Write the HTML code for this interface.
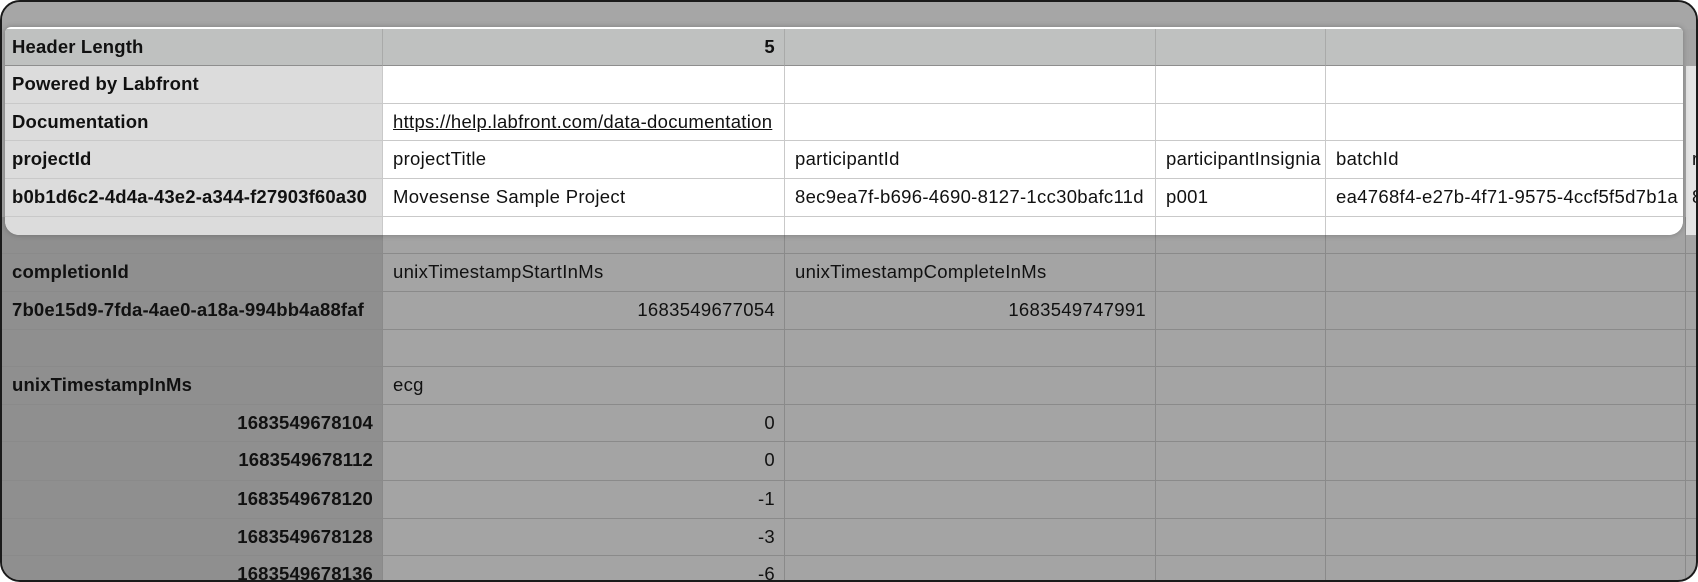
<!DOCTYPE html>
<html><head><meta charset="utf-8"><style>
*{margin:0;padding:0;box-sizing:border-box}
body{width:1698px;height:582px;background:#fff;overflow:hidden;font-family:"Liberation Sans",Arial,sans-serif;font-size:18.5px;letter-spacing:0.3px;color:#111}
#win{position:absolute;left:0;top:0;width:1698px;height:582px;border:2px solid #1a1a1a;border-radius:20px;overflow:hidden;background:#a4a4a4}
.r{position:absolute;left:0;width:1698px;height:38px}
.c{position:absolute;top:0;height:100%;border-right:1px solid #8a8a8a;border-bottom:1px solid #8a8a8a;padding:0 9px 0 10px;line-height:36px;white-space:nowrap;overflow:hidden}
.c0{left:0;width:381px;background:#8f8f8f;font-weight:bold;letter-spacing:0.15px}
.c1{left:381px;width:402px}.c2{left:783px;width:371px}.c3{left:1154px;width:170px}.c4{left:1324px;width:360px}.c5{left:1684px;width:30px;padding-left:6px}
.rt{text-align:right}
#panel{position:absolute;left:3px;top:25px;width:1678px;height:208px;border-radius:6px 6px 14px 14px;overflow:hidden;background:#fff;box-shadow:0 0 6px rgba(0,0,0,.25)}
#panel .r{left:-3px}
#panel .c{border-color:#c9c9c9;background:#fff}
#panel .c0{background:#dcdcdc}
#panel .hd .c{background:#bfc1c0;border-bottom-color:#8e8e8e;border-right-color:#a9aaa9}
a{color:#111;text-decoration:underline}
</style></head><body>
<div id="win">
<div style="position:absolute;left:0;top:0;width:1698px;height:27px;background:#a6a6a6"></div>
<div style="position:absolute;left:1684px;top:64px;width:20px;height:169px;background:#e4e4e4"></div>
<div class="r" style="top:139px"><div class="c c5" style="border:none">r</div></div>
<div class="r" style="top:177px"><div class="c c5" style="border:none">8</div></div>
<div class="r" style="top:215px;height:37px"><div class="c c0"></div><div class="c c1"></div><div class="c c2"></div><div class="c c3"></div><div class="c c4"></div><div class="c c5"></div></div>
<div class="r" style="top:252px"><div class="c c0">completionId</div><div class="c c1">unixTimestampStartInMs</div><div class="c c2">unixTimestampCompleteInMs</div><div class="c c3"></div><div class="c c4"></div><div class="c c5"></div></div>
<div class="r" style="top:290px"><div class="c c0">7b0e15d9-7fda-4ae0-a18a-994bb4a88faf</div><div class="c c1 rt">1683549677054</div><div class="c c2 rt">1683549747991</div><div class="c c3"></div><div class="c c4"></div><div class="c c5"></div></div>
<div class="r" style="top:328px;height:37px"><div class="c c0"></div><div class="c c1"></div><div class="c c2"></div><div class="c c3"></div><div class="c c4"></div><div class="c c5"></div></div>
<div class="r" style="top:365px"><div class="c c0">unixTimestampInMs</div><div class="c c1">ecg</div><div class="c c2"></div><div class="c c3"></div><div class="c c4"></div><div class="c c5"></div></div>
<div class="r" style="top:403px;height:37px"><div class="c c0 rt">1683549678104</div><div class="c c1 rt">0</div><div class="c c2"></div><div class="c c3"></div><div class="c c4"></div><div class="c c5"></div></div>
<div class="r" style="top:440px;height:39px"><div class="c c0 rt">1683549678112</div><div class="c c1 rt">0</div><div class="c c2"></div><div class="c c3"></div><div class="c c4"></div><div class="c c5"></div></div>
<div class="r" style="top:479px"><div class="c c0 rt">1683549678120</div><div class="c c1 rt">-1</div><div class="c c2"></div><div class="c c3"></div><div class="c c4"></div><div class="c c5"></div></div>
<div class="r" style="top:517px;height:37px"><div class="c c0 rt">1683549678128</div><div class="c c1 rt">-3</div><div class="c c2"></div><div class="c c3"></div><div class="c c4"></div><div class="c c5"></div></div>
<div class="r" style="top:554px"><div class="c c0 rt">1683549678136</div><div class="c c1 rt">-6</div><div class="c c2"></div><div class="c c3"></div><div class="c c4"></div><div class="c c5"></div></div>

<div id="panel">
<div class="r hd" style="top:2px;height:37px"><div class="c c0">Header Length</div><div class="c c1 rt" style="font-weight:bold">5</div><div class="c c2"></div><div class="c c3"></div><div class="c c4"></div><div class="c c5"></div></div>
<div class="r" style="top:39px"><div class="c c0">Powered by Labfront</div><div class="c c1"></div><div class="c c2"></div><div class="c c3"></div><div class="c c4"></div><div class="c c5"></div></div>
<div class="r" style="top:77px;height:37px"><div class="c c0">Documentation</div><div class="c c1"><a>https://help.labfront.com/data-documentation</a></div><div class="c c2"></div><div class="c c3"></div><div class="c c4"></div><div class="c c5"></div></div>
<div class="r" style="top:114px"><div class="c c0">projectId</div><div class="c c1">projectTitle</div><div class="c c2">participantId</div><div class="c c3">participantInsignia</div><div class="c c4">batchId</div><div class="c c5"></div></div>
<div class="r" style="top:152px"><div class="c c0">b0b1d6c2-4d4a-43e2-a344-f27903f60a30</div><div class="c c1">Movesense Sample Project</div><div class="c c2">8ec9ea7f-b696-4690-8127-1cc30bafc11d</div><div class="c c3">p001</div><div class="c c4">ea4768f4-e27b-4f71-9575-4ccf5f5d7b1a</div><div class="c c5"></div></div>
<div class="r" style="top:190px"><div class="c c0"></div><div class="c c1"></div><div class="c c2"></div><div class="c c3"></div><div class="c c4"></div><div class="c c5"></div></div>
</div>
</div>
</body></html>
